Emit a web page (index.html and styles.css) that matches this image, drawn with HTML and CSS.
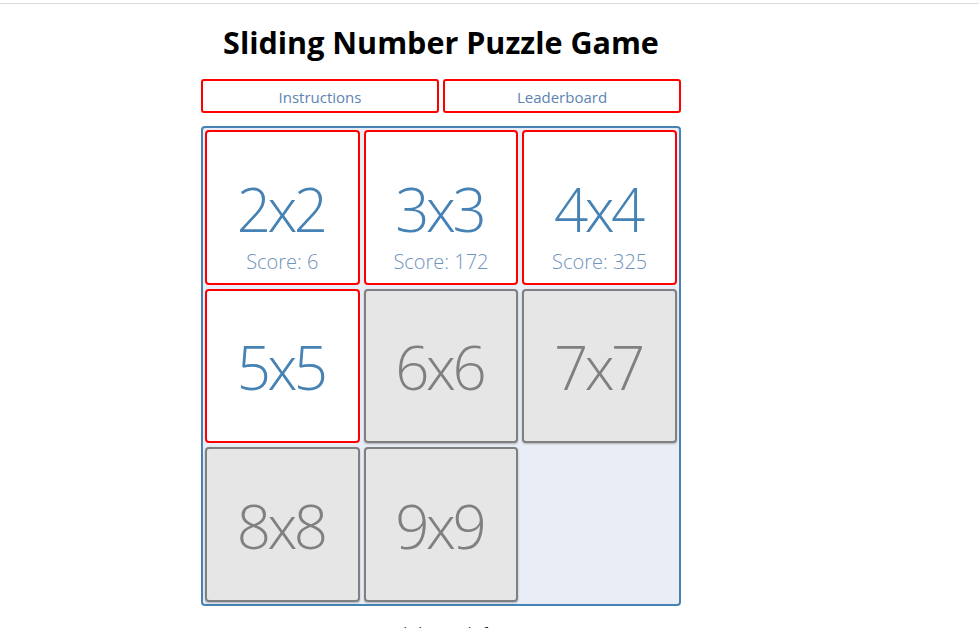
FILE: index.html
```html
<!DOCTYPE html>
<html lang="en">
<head>
<meta charset="utf-8">
<title>Sliding Number Puzzle Game</title>
<link rel="stylesheet" href="styles.css">
</head>
<body>
<div class="topbar"></div>
<main class="app">
  <h1 class="title">Sliding Number Puzzle Game</h1>
  <nav class="menu">
    <button class="menu-btn">Instructions</button>
    <button class="menu-btn">Leaderboard</button>
  </nav>
  <section class="board">
    <div class="tile open"><span class="label">2x2</span><span class="score">Score: 6</span></div>
    <div class="tile open"><span class="label">3x3</span><span class="score">Score: 172</span></div>
    <div class="tile open"><span class="label">4x4</span><span class="score">Score: 325</span></div>
    <div class="tile open"><span class="label">5x5</span></div>
    <div class="tile locked"><span class="label">6x6</span></div>
    <div class="tile locked"><span class="label">7x7</span></div>
    <div class="tile locked"><span class="label">8x8</span></div>
    <div class="tile locked"><span class="label">9x9</span></div>
  </section>
  <p class="footer">Made by Puzzle fan</p>
</main>
</body>
</html>
```
FILE: styles.css
```css
html, body {
  margin: 0;
  padding: 0;
  background: #ffffff;
  overflow: hidden;
}
body {
  font-family: "Open Sans", "Noto Sans", sans-serif;
  height: 628px;
}
.topbar {
  height: 3px;
  border-bottom: 1px solid #dcdcdc;
}
.app {
  width: 480px;
  margin-left: 201px;
  display: flex;
  flex-direction: column;
}
.title {
  margin: 18px 0 0;
  font-size: 30.5px;
  line-height: 40px;
  font-weight: 700;
  text-align: center;
  color: #000;
}
.menu {
  margin-top: 17px;
  display: grid;
  grid-template-columns: 1fr 1fr;
  gap: 4px;
}
.menu-btn {
  height: 34px;
  background: #fff;
  border: 2px solid #ff0000;
  border-radius: 3px;
  font-family: "Open Sans", "Noto Sans", sans-serif;
  font-size: 15px;
  font-weight: 400;
  color: #5b84b1;
  padding: 2px 0 0;
}
.board {
  margin-top: 13px;
  height: 480px;
  box-sizing: border-box;
  border: 2px solid #4682b4;
  border-radius: 4px;
  background: #e9edf5;
  padding: 2px;
  display: grid;
  grid-template-columns: repeat(3, 1fr);
  grid-template-rows: repeat(3, 1fr);
  gap: 4px;
}
.tile {
  position: relative;
  box-sizing: border-box;
  border-radius: 4px;
  border: 2px solid;
  display: flex;
  align-items: center;
  justify-content: center;
}
.tile.open {
  background: #ffffff;
  border-color: #ff0000;
  color: #4682b4;
}
.tile.locked {
  background: #e6e6e6;
  border-color: #808080;
  color: #808080;
  box-shadow: 0 1px 2px rgba(0,0,0,0.25);
}
.label {
  font-size: 60px;
  font-weight: 300;
  line-height: 44px;
  letter-spacing: -3.5px;
  margin-right: 3.5px;
  padding-top: 3px;
}
.score {
  position: absolute;
  left: 0;
  right: 0;
  bottom: 8px;
  text-align: center;
  font-size: 20px;
  font-weight: 300;
  color: #6f93bd;
}
.footer {
  margin: 17px 0 0;
  text-align: center;
  font-size: 14px;
  color: #222;
}
```
